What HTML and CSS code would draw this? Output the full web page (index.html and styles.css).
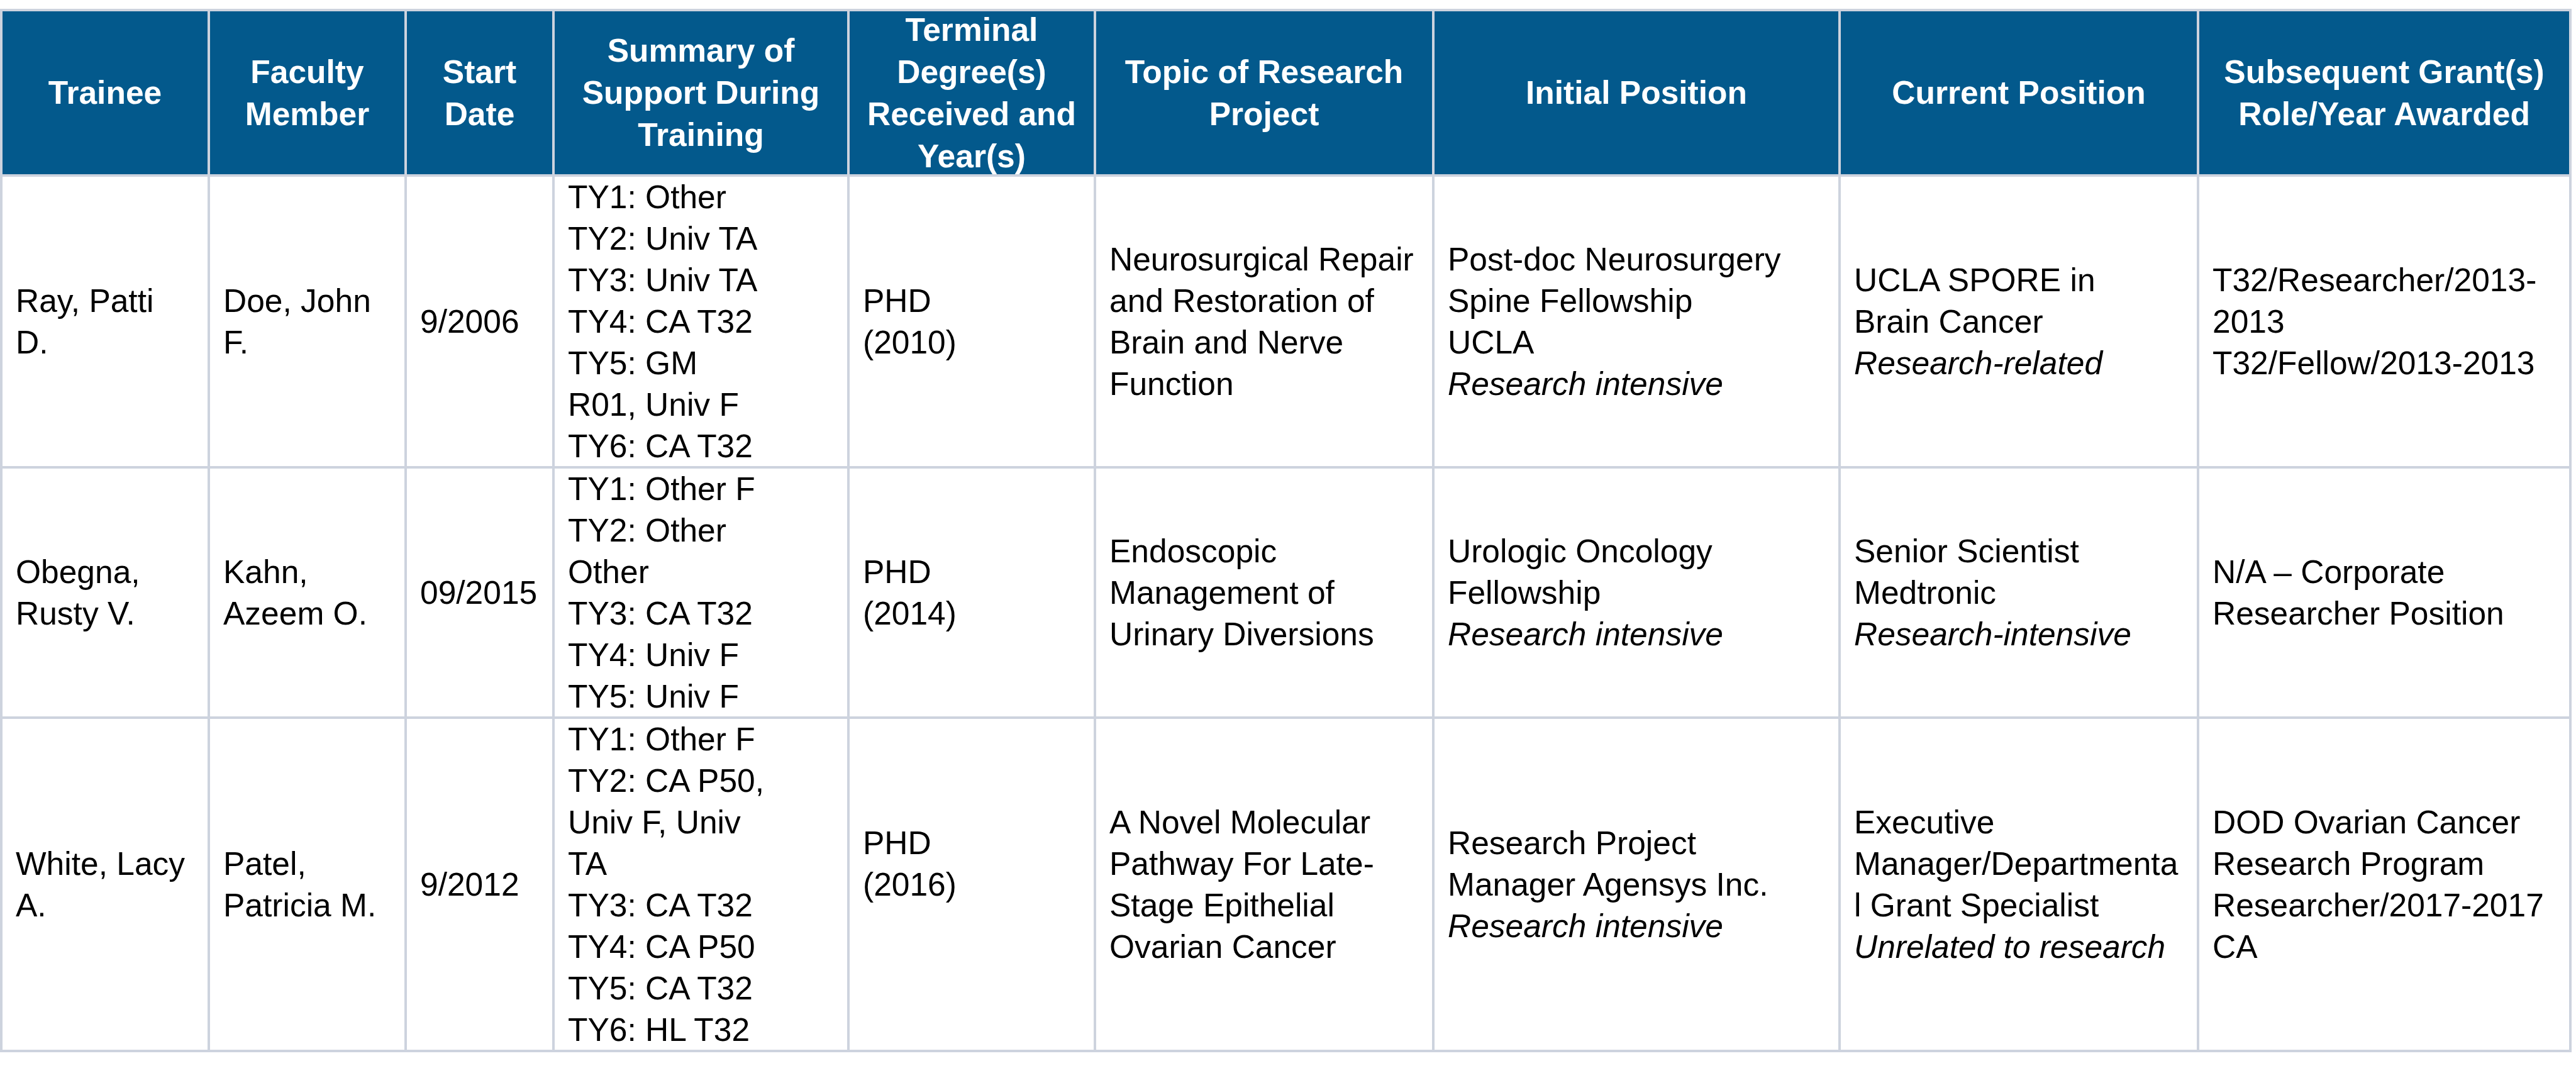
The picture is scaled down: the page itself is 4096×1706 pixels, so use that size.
FILE: index.html
```html
<!DOCTYPE html>
<html lang="en">
<head>
<meta charset="utf-8">
<title>Trainee Outcomes</title>
<link rel="stylesheet" href="styles.css">
</head>
<body>
<div class="grid-table" role="table">
  <div class="th" role="columnheader"><span>Trainee</span></div>
  <div class="th" role="columnheader"><span>Faculty<br>Member</span></div>
  <div class="th" role="columnheader"><span>Start<br>Date</span></div>
  <div class="th" role="columnheader"><span>Summary of<br>Support During<br>Training</span></div>
  <div class="th" role="columnheader"><span>Terminal<br>Degree(s)<br>Received and<br>Year(s)</span></div>
  <div class="th" role="columnheader"><span>Topic of Research<br>Project</span></div>
  <div class="th" role="columnheader"><span>Initial Position</span></div>
  <div class="th" role="columnheader"><span>Current Position</span></div>
  <div class="th" role="columnheader"><span>Subsequent Grant(s)<br>Role/Year Awarded</span></div>

  <div class="td"><span>Ray, Patti<br>D.</span></div>
  <div class="td"><span>Doe, John<br>F.</span></div>
  <div class="td"><span>9/2006</span></div>
  <div class="td"><span>TY1: Other<br>TY2: Univ TA<br>TY3: Univ TA<br>TY4: CA T32<br>TY5: GM<br>R01, Univ F<br>TY6: CA T32</span></div>
  <div class="td"><span>PHD<br>(2010)</span></div>
  <div class="td"><span>Neurosurgical Repair<br>and Restoration of<br>Brain and Nerve<br>Function</span></div>
  <div class="td"><span>Post-doc Neurosurgery<br>Spine Fellowship<br>UCLA<br><em>Research intensive</em></span></div>
  <div class="td"><span>UCLA SPORE in<br>Brain Cancer<br><em>Research-related</em></span></div>
  <div class="td"><span>T32/Researcher/2013-<br>2013<br>T32/Fellow/2013-2013</span></div>

  <div class="td"><span>Obegna,<br>Rusty V.</span></div>
  <div class="td"><span>Kahn,<br>Azeem O.</span></div>
  <div class="td"><span>09/2015</span></div>
  <div class="td"><span>TY1: Other F<br>TY2: Other<br>Other<br>TY3: CA T32<br>TY4: Univ F<br>TY5: Univ F</span></div>
  <div class="td"><span>PHD<br>(2014)</span></div>
  <div class="td"><span>Endoscopic<br>Management of<br>Urinary Diversions</span></div>
  <div class="td"><span>Urologic Oncology<br>Fellowship<br><em>Research intensive</em></span></div>
  <div class="td"><span>Senior Scientist<br>Medtronic<br><em>Research-intensive</em></span></div>
  <div class="td"><span>N/A – Corporate<br>Researcher Position</span></div>

  <div class="td"><span>White, Lacy<br>A.</span></div>
  <div class="td"><span>Patel,<br>Patricia M.</span></div>
  <div class="td"><span>9/2012</span></div>
  <div class="td"><span>TY1: Other F<br>TY2: CA P50,<br>Univ F, Univ<br>TA<br>TY3: CA T32<br>TY4: CA P50<br>TY5: CA T32<br>TY6: HL T32</span></div>
  <div class="td td-trailing-line"><span>PHD<br>(2016)</span></div>
  <div class="td"><span>A Novel Molecular<br>Pathway For Late-<br>Stage Epithelial<br>Ovarian Cancer</span></div>
  <div class="td"><span>Research Project<br>Manager Agensys Inc.<br><em>Research intensive</em></span></div>
  <div class="td"><span>Executive<br>Manager/Departmenta<br>l Grant Specialist<br><em>Unrelated to research</em></span></div>
  <div class="td"><span>DOD Ovarian Cancer<br>Research Program<br>Researcher/2017-2017<br>CA</span></div>
</div>
</body>
</html>
```

FILE: styles.css
```css
html, body {
  margin: 0;
  padding: 0;
  background: #ffffff;
}

body {
  font-family: "Liberation Sans", Arial, Helvetica, sans-serif;
  color: #000000;
}

.grid-table {
  display: grid;
  grid-template-columns: 326px 309px 231px 465px 388px 534px 642px 566px 588px;
  grid-template-rows: 259px 460px 394px 526px;
  gap: 4px;
  padding: 4px;
  margin-top: 14px;
  width: max-content;
  background: #cdd3de;
}

.th {
  background: #03598c;
  color: #ffffff;
  font-weight: bold;
  font-size: 51.5px;
  line-height: 67px;
  text-align: center;
  display: flex;
  align-items: center;
  justify-content: center;
  white-space: nowrap;
}

.td {
  background: #ffffff;
  color: #000000;
  font-size: 51.5px;
  line-height: 66px;
  padding: 0 21px;
  display: flex;
  align-items: center;
  white-space: nowrap;
}

.td-trailing-line {
  padding-bottom: 66px;
}

.td em {
  font-style: italic;
}
```
